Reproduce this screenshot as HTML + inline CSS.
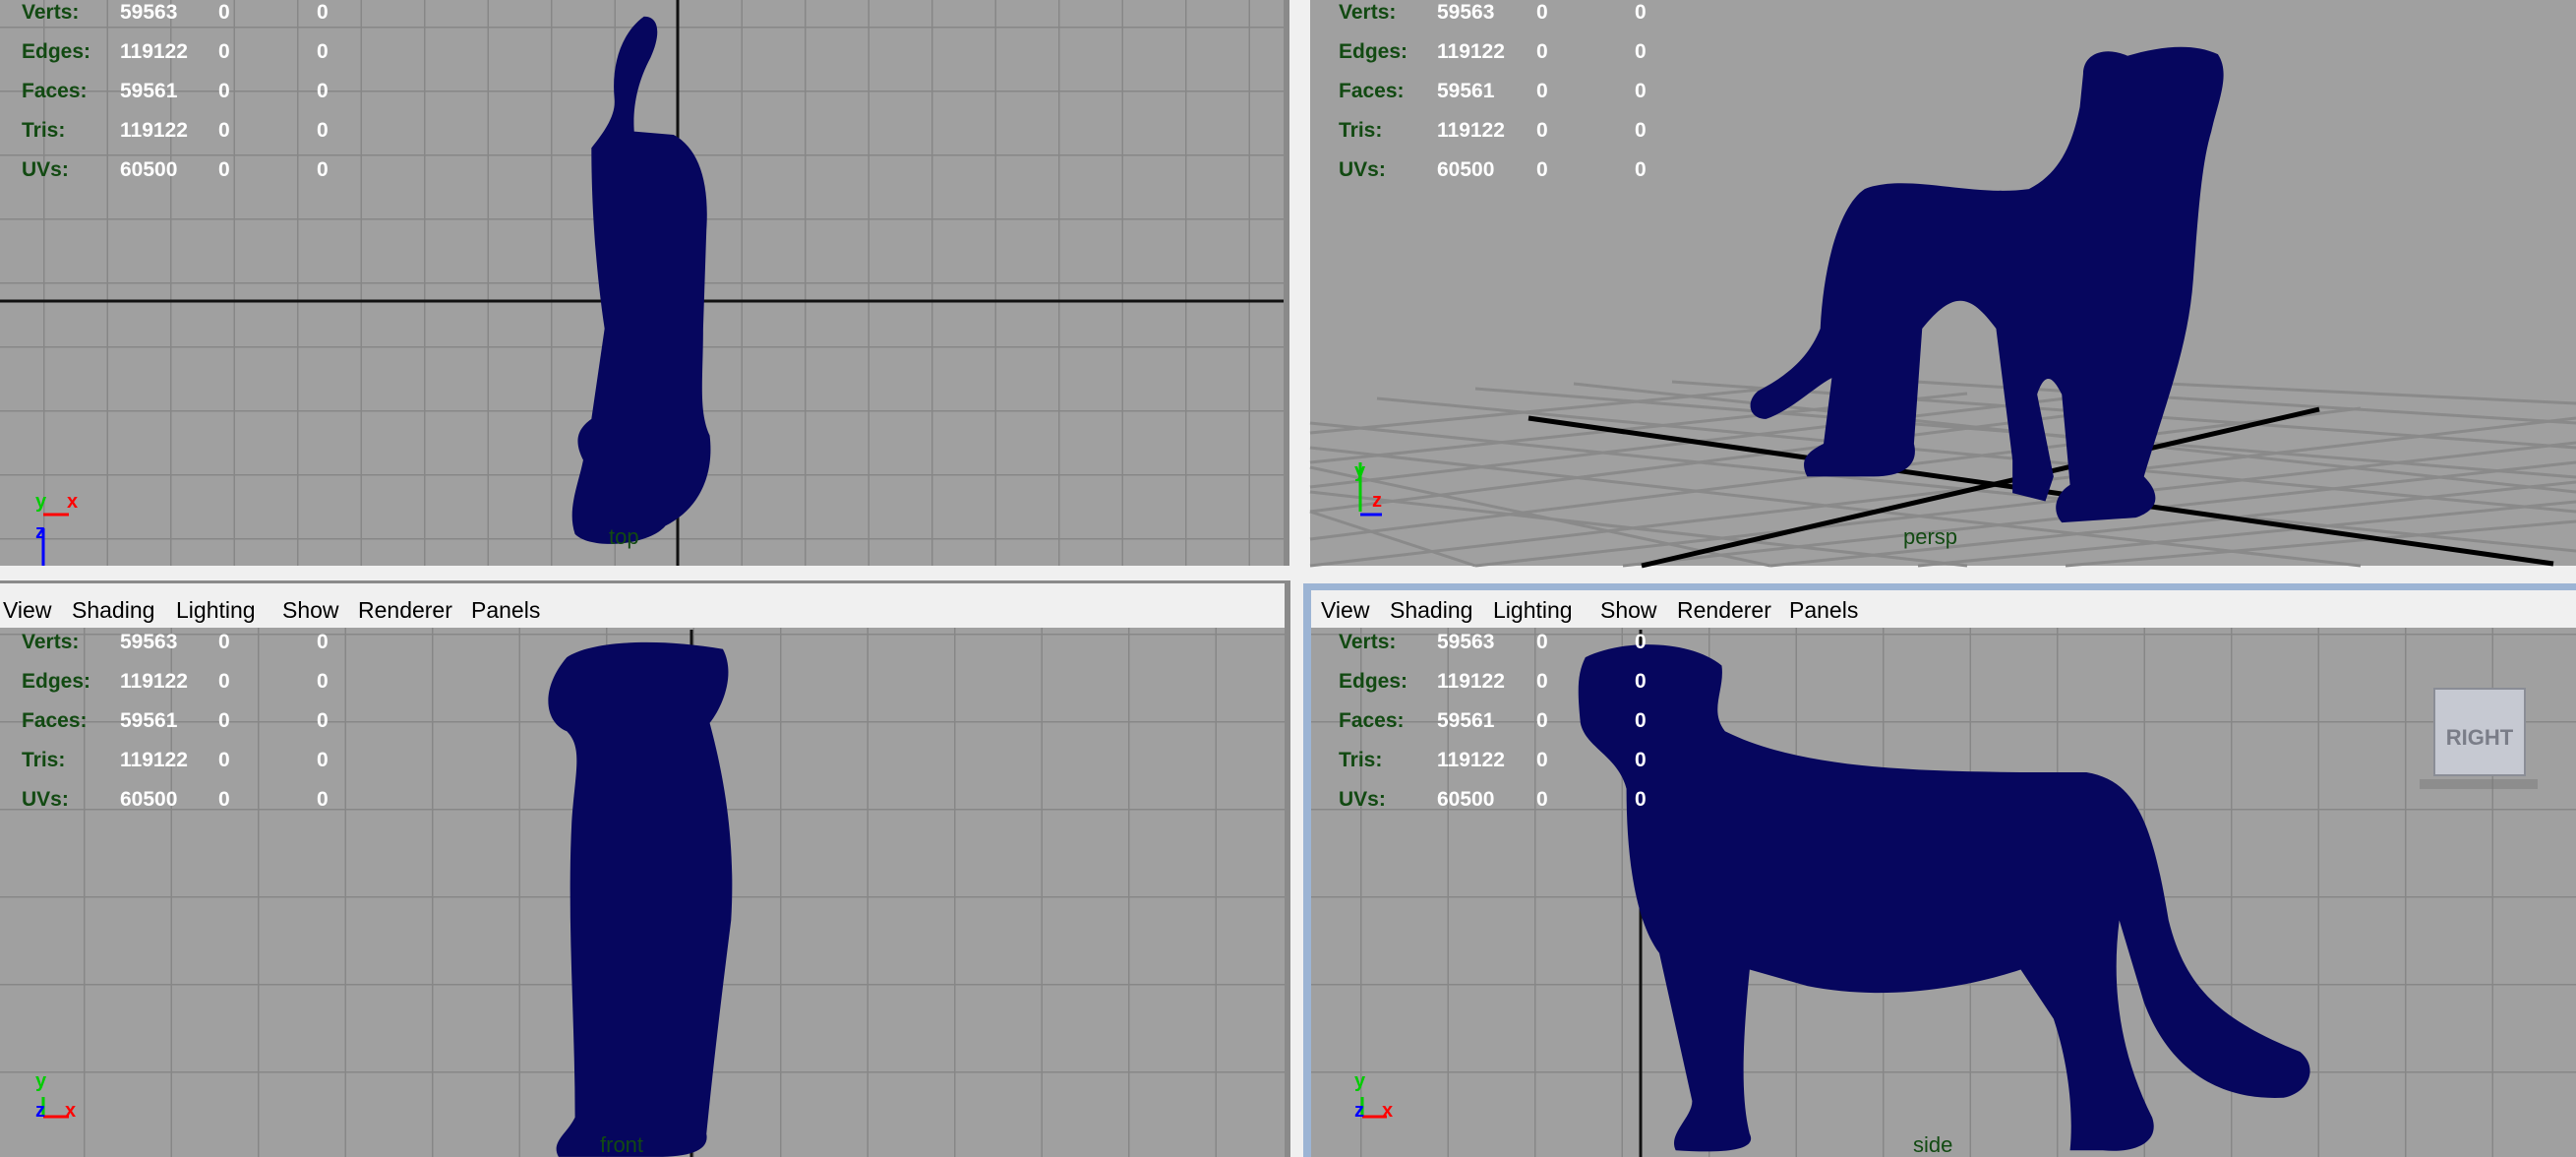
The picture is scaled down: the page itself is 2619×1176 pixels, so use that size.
<!DOCTYPE html>
<html><head><meta charset="utf-8"><style>
html,body{margin:0;padding:0;background:#f0f0f0;width:2619px;height:1176px;overflow:hidden;position:relative;font-family:"Liberation Sans",sans-serif}
svg{position:absolute;left:0;top:0}
.t{position:absolute;font-size:21px;font-weight:bold;white-space:nowrap;line-height:24px}
.g{color:#124a12}.w{color:#fff}
.m{position:absolute;font-size:23px;color:#000;white-space:nowrap;line-height:30px}
.lbl{position:absolute;font-size:22px;color:#124a12;line-height:24px}
</style></head><body>
<svg width="2619" height="1176" viewBox="0 0 2619 1176">
<defs>
<pattern id="g1" x="44" y="27" width="64.5" height="65" patternUnits="userSpaceOnUse"><rect width="64.5" height="65" fill="#a0a0a0"/><path d="M0 0V65M0 0H64.5" stroke="#878787" stroke-width="3"/></pattern>
<pattern id="g2" x="85" y="644" width="88.5" height="89" patternUnits="userSpaceOnUse"><rect width="88.5" height="89" fill="#a0a0a0"/><path d="M0 0V89M0 0H88.5" stroke="#878787" stroke-width="3"/></pattern>
<pattern id="g3" x="1383" y="644" width="88.5" height="89" patternUnits="userSpaceOnUse"><rect width="88.5" height="89" fill="#a0a0a0"/><path d="M0 0V89M0 0H88.5" stroke="#878787" stroke-width="3"/></pattern>
</defs>
<rect x="0" y="0" width="1310" height="575" fill="url(#g1)"/>
<line x1="0" y1="306" x2="1305" y2="306" stroke="#111" stroke-width="3"/>
<line x1="689" y1="0" x2="689" y2="575" stroke="#111" stroke-width="3"/>
<rect x="1305" y="0" width="6" height="575" fill="#8a8a8a"/>
<rect x="1332" y="0" width="1287" height="575" fill="#a0a0a0"/>
<g stroke="#8a8a8a" stroke-width="3" fill="none">
<path d="M1332 470 L2000 400 M1332 520 L2200 410 M1332 575 L2619 425 M1500 575 L2619 450 M1800 575 L2619 490 M2100 575 L2619 530 M1332 440 L1800 395 M1332 495 L2100 405 M1332 548 L2400 415 M1650 575 L2619 470 M1950 575 L2619 510"/>
<path d="M1332 430 L2619 560 M1400 405 L2619 520 M1500 395 L2619 485 M1700 388 L2619 455 M1332 475 L1800 575 M1332 520 L1500 575 M1900 385 L2619 430 M2100 385 L2619 410 M1332 455 L2400 575 M1332 500 L2000 575 M1600 390 L2619 500"/>
</g>
<line x1="1554" y1="425" x2="2596" y2="573" stroke="#000" stroke-width="5"/>
<line x1="2358" y1="416" x2="1669" y2="575" stroke="#000" stroke-width="5"/>
<rect x="0" y="590" width="1312" height="3" fill="#8a8a8a"/>
<rect x="0" y="593" width="1310" height="45" fill="#f0f0f0"/>
<rect x="0" y="638" width="1310" height="538" fill="url(#g2)"/>
<line x1="703" y1="640" x2="703" y2="1176" stroke="#111" stroke-width="3"/>
<rect x="1306" y="593" width="6" height="583" fill="#8a8a8a"/>
<rect x="1325" y="593" width="1294" height="583" fill="#9cb4d4"/>
<rect x="1333" y="600" width="1286" height="38" fill="#f0f0f0"/>
<rect x="1333" y="638" width="1286" height="538" fill="url(#g3)"/>
<line x1="1668" y1="640" x2="1668" y2="1176" stroke="#111" stroke-width="3"/>
<rect x="2475" y="700" width="92" height="88" fill="#c6c9d2" stroke="#8a8d96" stroke-width="2"/>
<rect x="2460" y="792" width="120" height="10" fill="#7a7a7a" opacity="0.5"/>
<text x="2521" y="757" font-family="Liberation Sans" font-weight="bold" font-size="22" fill="#7a7d88" text-anchor="middle">RIGHT</text>
<g transform="scale(1.6703)" fill="#06065e">
<path d="M392,10 C402,10 402,22 396,35 C388,50 385,65 386,80 L410,82 C425,90 432,110 430,140 L428,200 C428,230 425,250 432,265 C435,290 425,310 405,320 C395,332 360,335 350,325 C345,310 352,295 355,280 C350,270 350,262 360,255 L368,200 C362,160 360,120 360,90 C368,80 375,70 374,60 C372,40 378,20 392,10Z"/>
<path d="M1268,45 C1268,32 1282,28 1295,34 C1315,28 1335,26 1350,33 C1358,45 1350,62 1346,80 C1340,100 1338,130 1335,170 C1332,210 1320,240 1305,290 C1315,300 1315,310 1300,315 L1255,318 C1248,310 1252,300 1260,295 L1255,240 C1250,230 1245,225 1240,240 L1250,290 1245,305 1225,300 1225,280 1215,200 C1200,180 1190,175 1170,200 L1165,270 C1168,282 1160,290 1140,290 L1100,290 C1095,280 1100,275 1110,270 L1115,230 C1105,235 1090,250 1075,255 C1065,255 1062,245 1070,238 C1085,230 1100,220 1108,200 C1110,160 1120,125 1135,115 C1160,105 1200,120 1235,115 C1255,105 1262,85 1266,65Z"/>
<path d="M345,400 C360,390 400,388 440,395 C448,410 440,430 432,440 C440,470 448,510 445,560 C440,600 435,640 430,690 C432,700 420,704 400,704 L340,704 C335,695 345,690 350,680 C350,620 345,560 348,500 C350,470 355,455 345,445 C332,440 328,420 345,400Z"/>
<path d="M965,400 C990,388 1030,390 1048,405 C1050,420 1040,432 1050,445 C1100,470 1180,470 1270,470 C1300,475 1310,500 1320,560 C1330,600 1350,620 1400,640 C1412,650 1405,665 1390,668 C1350,670 1320,650 1305,610 L1290,560 C1285,600 1290,640 1310,680 C1315,695 1300,702 1280,700 L1260,700 C1262,680 1260,650 1250,620 L1230,590 C1200,600 1150,610 1100,600 L1065,590 C1060,640 1060,670 1065,690 C1070,700 1050,702 1020,700 C1015,690 1030,680 1030,670 L1010,580 C995,560 990,520 990,480 C985,460 965,455 962,440 C960,420 960,410 965,400Z"/>
</g>
<g stroke-width="3">
<line x1="44" y1="537" x2="44" y2="575" stroke="#00f"/><line x1="44" y1="523" x2="70" y2="523" stroke="#f00"/>
<line x1="44" y1="1115" x2="44" y2="1135" stroke="#0c0"/><line x1="44" y1="1135" x2="70" y2="1135" stroke="#f00"/>
<line x1="1385" y1="1115" x2="1385" y2="1135" stroke="#0c0"/><line x1="1385" y1="1135" x2="1410" y2="1135" stroke="#f00"/>
<line x1="1383" y1="470" x2="1383" y2="520" stroke="#0c0"/><line x1="1383" y1="523" x2="1405" y2="523" stroke="#00f"/>
</g>
<g font-family="Liberation Sans" font-weight="bold" font-size="20">
<text x="36" y="516" fill="#0c0">y</text><text x="68" y="516" fill="#f00">x</text><text x="36" y="547" fill="#00f">z</text>
<text x="36" y="1105" fill="#0c0">y</text><text x="36" y="1135" fill="#00f">z</text><text x="66" y="1135" fill="#f00">x</text>
<text x="1377" y="1105" fill="#0c0">y</text><text x="1377" y="1135" fill="#00f">z</text><text x="1405" y="1135" fill="#f00">x</text>
<text x="1377" y="485" fill="#0c0">y</text><text x="1395" y="515" fill="#f00">z</text>
</g>
</svg>

<div class="t g" style="left:22px;top:1px">Verts:</div><div class="t w" style="left:122px;top:1px">59563</div><div class="t w" style="left:222px;top:1px">0</div><div class="t w" style="left:322px;top:1px">0</div>
<div class="t g" style="left:22px;top:41px">Edges:</div><div class="t w" style="left:122px;top:41px">119122</div><div class="t w" style="left:222px;top:41px">0</div><div class="t w" style="left:322px;top:41px">0</div>
<div class="t g" style="left:22px;top:81px">Faces:</div><div class="t w" style="left:122px;top:81px">59561</div><div class="t w" style="left:222px;top:81px">0</div><div class="t w" style="left:322px;top:81px">0</div>
<div class="t g" style="left:22px;top:121px">Tris:</div><div class="t w" style="left:122px;top:121px">119122</div><div class="t w" style="left:222px;top:121px">0</div><div class="t w" style="left:322px;top:121px">0</div>
<div class="t g" style="left:22px;top:161px">UVs:</div><div class="t w" style="left:122px;top:161px">60500</div><div class="t w" style="left:222px;top:161px">0</div><div class="t w" style="left:322px;top:161px">0</div>

<div class="t g" style="left:1361px;top:1px">Verts:</div><div class="t w" style="left:1461px;top:1px">59563</div><div class="t w" style="left:1562px;top:1px">0</div><div class="t w" style="left:1662px;top:1px">0</div>
<div class="t g" style="left:1361px;top:41px">Edges:</div><div class="t w" style="left:1461px;top:41px">119122</div><div class="t w" style="left:1562px;top:41px">0</div><div class="t w" style="left:1662px;top:41px">0</div>
<div class="t g" style="left:1361px;top:81px">Faces:</div><div class="t w" style="left:1461px;top:81px">59561</div><div class="t w" style="left:1562px;top:81px">0</div><div class="t w" style="left:1662px;top:81px">0</div>
<div class="t g" style="left:1361px;top:121px">Tris:</div><div class="t w" style="left:1461px;top:121px">119122</div><div class="t w" style="left:1562px;top:121px">0</div><div class="t w" style="left:1662px;top:121px">0</div>
<div class="t g" style="left:1361px;top:161px">UVs:</div><div class="t w" style="left:1461px;top:161px">60500</div><div class="t w" style="left:1562px;top:161px">0</div><div class="t w" style="left:1662px;top:161px">0</div>

<div class="t g" style="left:22px;top:641px">Verts:</div><div class="t w" style="left:122px;top:641px">59563</div><div class="t w" style="left:222px;top:641px">0</div><div class="t w" style="left:322px;top:641px">0</div>
<div class="t g" style="left:22px;top:681px">Edges:</div><div class="t w" style="left:122px;top:681px">119122</div><div class="t w" style="left:222px;top:681px">0</div><div class="t w" style="left:322px;top:681px">0</div>
<div class="t g" style="left:22px;top:721px">Faces:</div><div class="t w" style="left:122px;top:721px">59561</div><div class="t w" style="left:222px;top:721px">0</div><div class="t w" style="left:322px;top:721px">0</div>
<div class="t g" style="left:22px;top:761px">Tris:</div><div class="t w" style="left:122px;top:761px">119122</div><div class="t w" style="left:222px;top:761px">0</div><div class="t w" style="left:322px;top:761px">0</div>
<div class="t g" style="left:22px;top:801px">UVs:</div><div class="t w" style="left:122px;top:801px">60500</div><div class="t w" style="left:222px;top:801px">0</div><div class="t w" style="left:322px;top:801px">0</div>

<div class="t g" style="left:1361px;top:641px">Verts:</div><div class="t w" style="left:1461px;top:641px">59563</div><div class="t w" style="left:1562px;top:641px">0</div><div class="t w" style="left:1662px;top:641px">0</div>
<div class="t g" style="left:1361px;top:681px">Edges:</div><div class="t w" style="left:1461px;top:681px">119122</div><div class="t w" style="left:1562px;top:681px">0</div><div class="t w" style="left:1662px;top:681px">0</div>
<div class="t g" style="left:1361px;top:721px">Faces:</div><div class="t w" style="left:1461px;top:721px">59561</div><div class="t w" style="left:1562px;top:721px">0</div><div class="t w" style="left:1662px;top:721px">0</div>
<div class="t g" style="left:1361px;top:761px">Tris:</div><div class="t w" style="left:1461px;top:761px">119122</div><div class="t w" style="left:1562px;top:761px">0</div><div class="t w" style="left:1662px;top:761px">0</div>
<div class="t g" style="left:1361px;top:801px">UVs:</div><div class="t w" style="left:1461px;top:801px">60500</div><div class="t w" style="left:1562px;top:801px">0</div><div class="t w" style="left:1662px;top:801px">0</div>

<div class="m" style="left:3px;top:605px">View</div><div class="m" style="left:73px;top:605px">Shading</div><div class="m" style="left:179px;top:605px">Lighting</div><div class="m" style="left:287px;top:605px">Show</div><div class="m" style="left:364px;top:605px">Renderer</div><div class="m" style="left:479px;top:605px">Panels</div>
<div class="m" style="left:1343px;top:605px">View</div><div class="m" style="left:1413px;top:605px">Shading</div><div class="m" style="left:1518px;top:605px">Lighting</div><div class="m" style="left:1627px;top:605px">Show</div><div class="m" style="left:1705px;top:605px">Renderer</div><div class="m" style="left:1819px;top:605px">Panels</div>

<div class="lbl" style="left:619px;top:534px">top</div>
<div class="lbl" style="left:1935px;top:534px">persp</div>
<div class="lbl" style="left:610px;top:1152px">front</div>
<div class="lbl" style="left:1945px;top:1152px">side</div>
</body></html>
